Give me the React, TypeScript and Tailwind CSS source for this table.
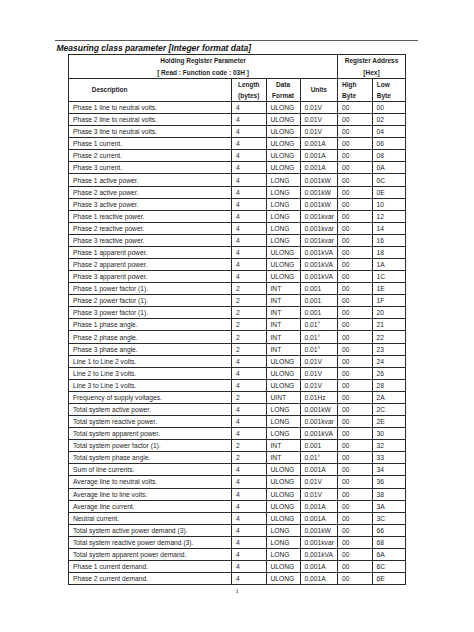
import React from "react";

type Row = [string, string, string, string, string, string];

const rows: Row[] = [
  ["Phase 1 line to neutral volts.", "4", "ULONG", "0.01V", "00", "00"],
  ["Phase 2 line to neutral volts.", "4", "ULONG", "0.01V", "00", "02"],
  ["Phase 3 line to neutral volts.", "4", "ULONG", "0.01V", "00", "04"],
  ["Phase 1 current.", "4", "ULONG", "0.001A", "00", "06"],
  ["Phase 2 current.", "4", "ULONG", "0.001A", "00", "08"],
  ["Phase 3 current.", "4", "ULONG", "0.001A", "00", "0A"],
  ["Phase 1 active power.", "4", "LONG", "0.001kW", "00", "0C"],
  ["Phase 2 active power.", "4", "LONG", "0.001kW", "00", "0E"],
  ["Phase 3 active power.", "4", "LONG", "0.001kW", "00", "10"],
  ["Phase 1 reactive power.", "4", "LONG", "0.001kvar", "00", "12"],
  ["Phase 2 reactive power.", "4", "LONG", "0.001kvar", "00", "14"],
  ["Phase 3 reactive power.", "4", "LONG", "0.001kvar", "00", "16"],
  ["Phase 1 apparent power.", "4", "ULONG", "0.001kVA", "00", "18"],
  ["Phase 2 apparent power.", "4", "ULONG", "0.001kVA", "00", "1A"],
  ["Phase 3 apparent power.", "4", "ULONG", "0.001kVA", "00", "1C"],
  ["Phase 1 power factor (1).", "2", "INT", "0.001", "00", "1E"],
  ["Phase 2 power factor (1).", "2", "INT", "0.001", "00", "1F"],
  ["Phase 3 power factor (1).", "2", "INT", "0.001", "00", "20"],
  ["Phase 1 phase angle.", "2", "INT", "0.01°", "00", "21"],
  ["Phase 2 phase angle.", "2", "INT", "0.01°", "00", "22"],
  ["Phase 3 phase angle.", "2", "INT", "0.01°", "00", "23"],
  ["Line 1 to Line 2 volts.", "4", "ULONG", "0.01V", "00", "24"],
  ["Line 2 to Line 3 volts.", "4", "ULONG", "0.01V", "00", "26"],
  ["Line 3 to Line 1 volts.", "4", "ULONG", "0.01V", "00", "28"],
  ["Frequency of supply voltages.", "2", "UINT", "0.01Hz", "00", "2A"],
  ["Total system active power.", "4", "LONG", "0.001kW", "00", "2C"],
  ["Total system reactive power.", "4", "LONG", "0.001kvar", "00", "2E"],
  ["Total system apparent power.", "4", "LONG", "0.001kVA", "00", "30"],
  ["Total system power factor (1).", "2", "INT", "0.001", "00", "32"],
  ["Total system phase angle.", "2", "INT", "0.01°", "00", "33"],
  ["Sum of line currents.", "4", "ULONG", "0.001A", "00", "34"],
  ["Average line to neutral volts.", "4", "ULONG", "0.01V", "00", "36"],
  ["Average line to line volts.", "4", "ULONG", "0.01V", "00", "38"],
  ["Average line current.", "4", "ULONG", "0.001A", "00", "3A"],
  ["Neutral current.", "4", "ULONG", "0.001A", "00", "3C"],
  ["Total system active power demand (3).", "4", "LONG", "0.001kW", "00", "66"],
  ["Total system reactive power demand (3).", "4", "LONG", "0.001kvar", "00", "68"],
  ["Total system apparent power demand.", "4", "LONG", "0.001kVA", "00", "6A"],
  ["Phase 1 current demand.", "4", "ULONG", "0.001A", "00", "6C"],
  ["Phase 2 current demand.", "4", "ULONG", "0.001A", "00", "6E"],
];

const cellBase = "border-r border-b border-[#2a2a2a]";

export default function App() {
  return (
    <div className="w-[474px] h-[632px] bg-white overflow-hidden font-['Liberation_Sans',Arial,sans-serif] text-[#1e1e1e]">
      <div className="h-[40px]" />
      <div className="ml-[55px] w-[363px] h-px bg-[#5a5a5a]" />
      <div className="ml-[56.5px] h-[13px] leading-[15px] text-[8.5px] font-bold italic text-[#111] whitespace-nowrap">
        Measuring class parameter [Integer format data]
      </div>
      <div className="ml-[68px] w-[338px] border-l border-t border-[#2a2a2a] grid grid-cols-[163px_34.5px_34px_37.5px_34.5px_33.5px]">
        {/* Header row 1 */}
        <div className={`${cellBase} col-span-4 h-[24px] flex flex-col items-center justify-center text-[6.5px] font-bold leading-[11.3px]`}>
          <span>Holding Register Parameter</span>
          <span>[ Read : Function code : 03H ]</span>
        </div>
        <div className={`${cellBase} col-span-2 h-[24px] flex flex-col items-center justify-center text-[6.5px] font-bold leading-[11.3px]`}>
          <span>Register Address</span>
          <span>[Hex]</span>
        </div>
        {/* Header row 2 */}
        <div className={`${cellBase} h-[23px] flex items-center pl-[22.7px] text-[6.5px] font-bold`}>
          Description
        </div>
        <div className={`${cellBase} h-[23px] flex flex-col items-center justify-center text-[6.5px] font-bold leading-[11px]`}>
          <span>Length</span>
          <span>(bytes)</span>
        </div>
        <div className={`${cellBase} h-[23px] flex flex-col items-center justify-center text-[6.5px] font-bold leading-[11px]`}>
          <span>Data</span>
          <span>Format</span>
        </div>
        <div className={`${cellBase} h-[23px] flex items-center justify-center text-[6.5px] font-bold`}>
          Units
        </div>
        <div className={`${cellBase} h-[23px] flex flex-col justify-center pl-[4px] text-[6.5px] font-bold leading-[11px]`}>
          <span>High</span>
          <span>Byte</span>
        </div>
        <div className={`${cellBase} h-[23px] flex flex-col justify-center pl-[4.2px] text-[6.5px] font-bold leading-[11px]`}>
          <span>Low</span>
          <span>Byte</span>
        </div>
        {/* Data rows */}
        {rows.map((r, i) =>
          r.map((c, j) => (
            <div
              key={`${i}-${j}`}
              className={`${cellBase} h-[12.09px] flex items-center pl-[4px] text-[6.7px] leading-[11px] whitespace-nowrap overflow-hidden`}
            >
              {c}
            </div>
          ))
        )}
      </div>
      <div className="mt-[1.4px] w-[474px] text-center text-[6.5px] leading-[8px] font-['Liberation_Serif',serif] text-[#222]">
        1
      </div>
    </div>
  );
}
